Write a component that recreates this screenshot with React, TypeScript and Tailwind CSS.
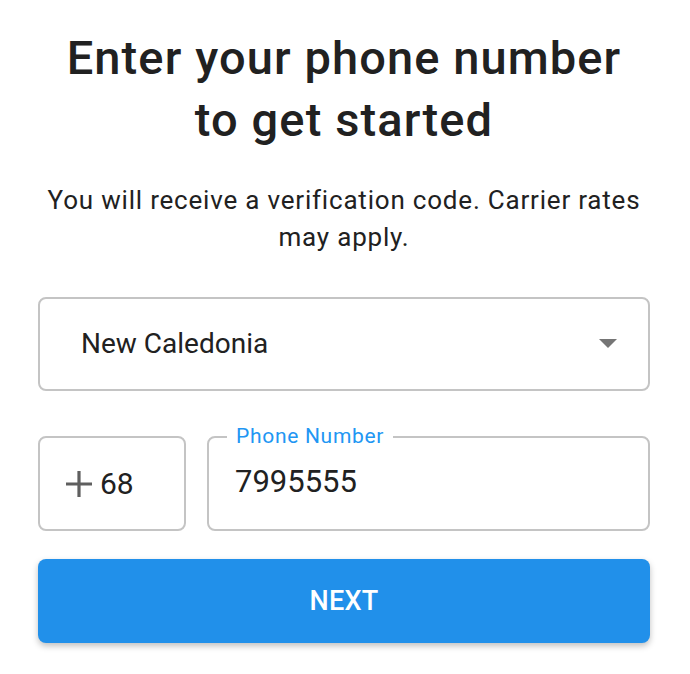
export default function App() {
  return (
    <div className="min-h-screen w-full bg-white font-['Roboto',sans-serif] text-[#212121]">
      <div className="flex flex-col pl-[38px] pr-[40px] pt-[27px]">
        <h1 className="text-center text-[47px] font-medium leading-[62px] tracking-[1.1px]">
          Enter your phone number
          <br />
          to get started
        </h1>

        <p className="mt-[31px] text-center text-[26px] leading-[37px] tracking-[0.8px]">
          You will receive a verification code. Carrier rates
          <br />
          may apply.
        </p>

        {/* Country select */}
        <div className="mt-[41px] flex h-[94px] items-center justify-between rounded-[8px] border-2 border-[#c4c4c4] pl-[41px] pr-[31px]">
          <span className="text-[28px]">New Caledonia</span>
          <svg width="18" height="9" viewBox="0 0 18 9" className="mt-[-2px]">
            <path d="M0 0 L18 0 L9 9 Z" fill="#757575" />
          </svg>
        </div>

        {/* Phone row */}
        <div className="mt-[45px] flex gap-[21px]">
          <div className="flex h-[95px] w-[148px] items-center gap-[8px] rounded-[8px] border-2 border-[#c4c4c4] pl-[26px]">
            <svg width="26" height="26" viewBox="0 0 26 26">
              <path d="M13 0 V26 M0 13 H26" stroke="#5f5f5f" strokeWidth="3.2" />
            </svg>
            <span className="text-[30px]">68</span>
          </div>
          <div className="relative flex h-[95px] flex-1 items-center rounded-[8px] border-2 border-[#c4c4c4] pl-[26px]">
            <span className="absolute left-[18px] top-[-15px] bg-white px-[9px] text-[21px] leading-[26px] tracking-[0.7px] text-[#2196f3]">
              Phone Number
            </span>
            <span className="mt-[-2px] text-[31px]">7995555</span>
          </div>
        </div>

        <button className="mt-[28px] flex h-[84px] items-center justify-center rounded-[8px] bg-[#2190ea] text-[27px] font-medium tracking-[0.3px] text-white shadow-[0_3px_6px_rgba(0,0,0,0.25)]">
          NEXT
        </button>
      </div>
    </div>
  );
}
